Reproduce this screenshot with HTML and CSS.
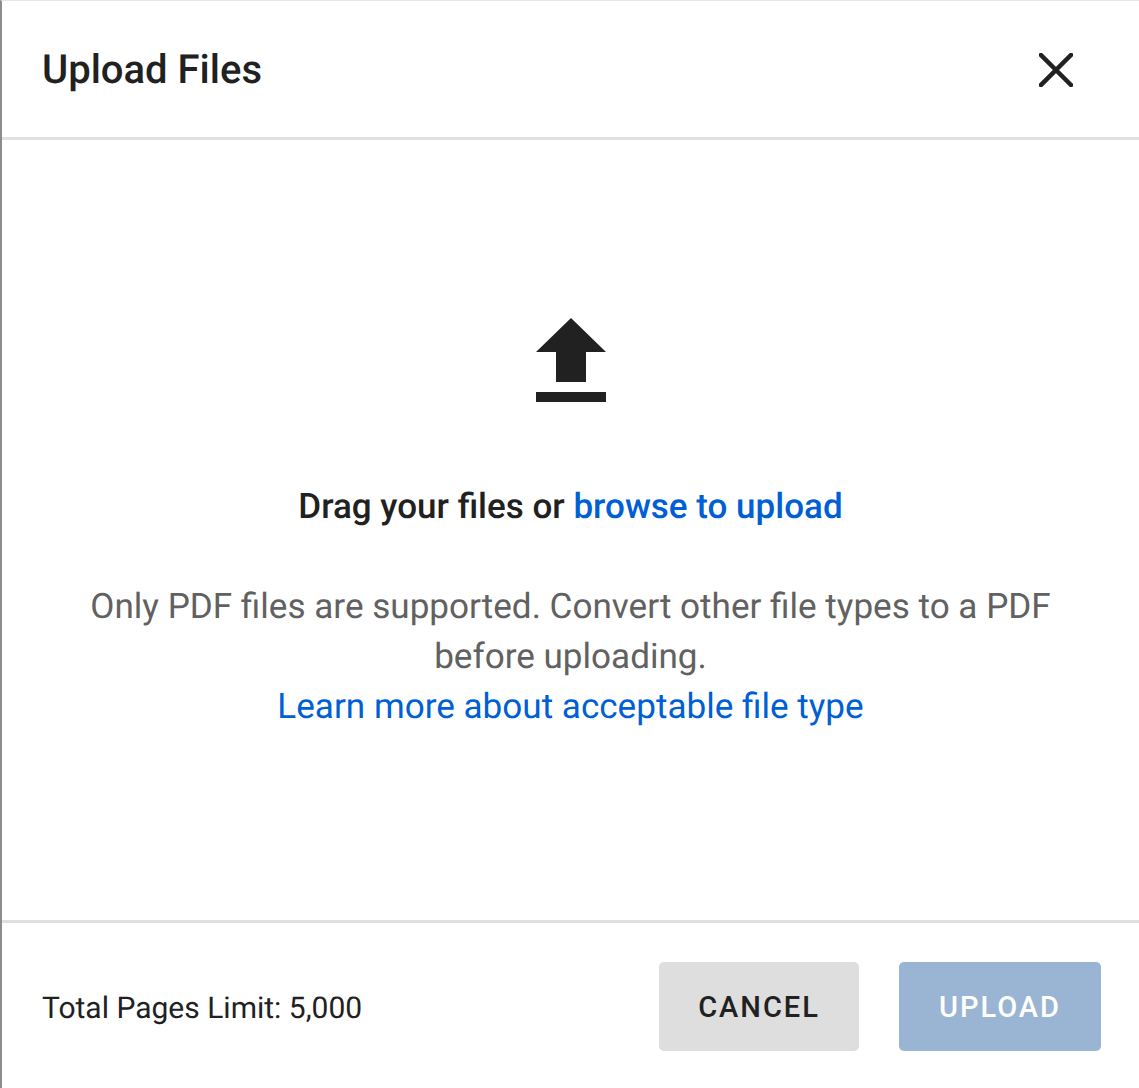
FILE: index.html
```html
<!DOCTYPE html>
<html lang="en">
<head>
    <meta charset="UTF-8">
    <title>Upload Files</title>
    <link rel="stylesheet" href="styles.css">
</head>
<body>

    <div class="dialog">
        <div class="header">
            <h1>Upload Files</h1>
            <button class="close" aria-label="Close">
                <svg width="34" height="34" viewBox="0 0 34 34">
                    <path d="M2 2 L32 32 M32 2 L2 32" stroke="#212121" stroke-width="4.5" stroke-linecap="square" fill="none"/>
                </svg>
            </button>
        </div>

        <div class="body">
            <svg class="upload-icon" width="70" height="84" viewBox="0 0 70 84">
                <path d="M35 0 L70 34 H50 V64 H20 V34 H0 Z M0 74 H70 V84 H0 Z" fill="#212121"/>
            </svg>
            <p class="drag">Drag your files or <a href="#">browse to upload</a></p>
            <p class="note">
                Only PDF files are supported. Convert other file types to a PDF<br>
                before uploading.<br>
                <a href="#">Learn more about acceptable file type</a>
            </p>
        </div>

        <div class="footer">
            <span class="limit">Total Pages Limit: 5,000</span>
            <div class="actions">
                <button class="button cancel">CANCEL</button>
                <button class="button upload">UPLOAD</button>
            </div>
        </div>
    </div>

</body>
</html>
```

FILE: styles.css
```css
html, body {
    margin: 0;
    padding: 0;
    background-color: #fff;
}

body {
    font-family: 'Roboto', sans-serif;
    color: #212121;
    text-rendering: geometricPrecision;
}

.dialog {
    width: 1139px;
    height: 1088px;
    box-sizing: border-box;
    display: flex;
    flex-direction: column;
    border-left: 2px solid #8c8c8c;
    border-top: 1px solid #e6e6e6;
}

.header {
    height: 136px;
    flex: none;
    display: flex;
    align-items: center;
    justify-content: space-between;
    padding: 0 66px 0 40px;
    border-bottom: 3px solid #e0e0e0;
}

.header h1 {
    margin: 0;
    font-size: 40px;
    font-weight: 500;
}

.close {
    display: flex;
    margin-top: 2px;
    padding: 0;
    border: none;
    background: none;
}

.body {
    flex: 1;
    display: flex;
    flex-direction: column;
    align-items: center;
    text-align: center;
    padding-top: 178px;
}

.upload-icon {
    display: block;
}

.body a {
    color: #005fd4;
    text-decoration: none;
}

.drag {
    margin: 80px 0 0;
    font-size: 35px;
    line-height: 50px;
    font-weight: 500;
}

.note {
    margin: 49px 0 0;
    font-size: 35.1px;
    line-height: 50px;
    color: #616161;
}

.footer {
    height: 168px;
    flex: none;
    box-sizing: border-box;
    display: flex;
    align-items: center;
    justify-content: space-between;
    padding: 2px 38px 0 40px;
    border-top: 3px solid #e0e0e0;
}

.limit {
    padding-top: 4px;
    font-size: 30px;
}

.actions {
    display: flex;
    gap: 40px;
}

.button {
    height: 89px;
    border: none;
    border-radius: 5px;
    font-family: 'Roboto', sans-serif;
    font-size: 29px;
    font-weight: 500;
    letter-spacing: 2px;
}

.cancel {
    width: 200px;
    background-color: #dedede;
    color: #212121;
}

.upload {
    width: 202px;
    background-color: #9ab4d3;
    color: #fff;
}
```
